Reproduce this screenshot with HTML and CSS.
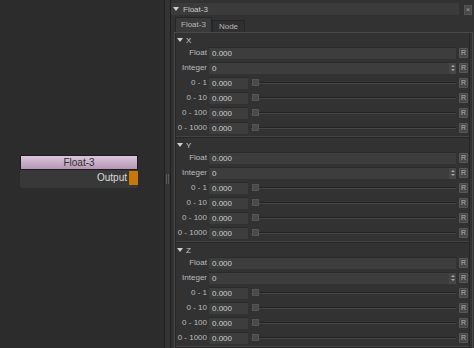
FILE: index.html
```html
<!DOCTYPE html>
<html>
<head>
<meta charset="utf-8">
<link rel="stylesheet" href="styles.css">
</head>
<body>
<div class="app">
  <div class="canvas">
    <div class="node">
      <div class="node-title">Float-3</div>
      <div class="node-body"><span class="plug-label">Output</span><span class="port"></span></div>
    </div>
  </div>
  <div class="splitter"><span class="grip"></span></div>
  <div class="panel">
    <div class="panel-head">
      <div class="name-bar"><span class="tri"></span><span class="name">Float-3</span></div>
      <span class="close">×</span>
    </div>
    <div class="tabs"><span class="tab active">Float-3</span><span class="tab">Node</span></div>
    <div class="pane">
      <section class="group">
        <div class="group-head"><span class="tri"></span><span class="group-name">X</span></div>
        <div class="row"><span class="lbl">Float</span><div class="ctl"><div class="field">0.000</div></div><span class="reset">R</span></div>
        <div class="row"><span class="lbl">Integer</span><div class="ctl"><div class="field">0<span class="spin"><i class="up"></i><i class="down"></i></span></div></div><span class="reset">R</span></div>
        <div class="row"><span class="lbl">0 - 1</span><div class="ctl"><div class="field short">0.000</div><div class="slider"><span class="handle"></span></div></div><span class="reset">R</span></div>
        <div class="row"><span class="lbl">0 - 10</span><div class="ctl"><div class="field short">0.000</div><div class="slider"><span class="handle"></span></div></div><span class="reset">R</span></div>
        <div class="row"><span class="lbl">0 - 100</span><div class="ctl"><div class="field short">0.000</div><div class="slider"><span class="handle"></span></div></div><span class="reset">R</span></div>
        <div class="row"><span class="lbl">0 - 1000</span><div class="ctl"><div class="field short">0.000</div><div class="slider"><span class="handle"></span></div></div><span class="reset">R</span></div>
      </section>
      <section class="group">
        <div class="group-head"><span class="tri"></span><span class="group-name">Y</span></div>
        <div class="row"><span class="lbl">Float</span><div class="ctl"><div class="field">0.000</div></div><span class="reset">R</span></div>
        <div class="row"><span class="lbl">Integer</span><div class="ctl"><div class="field">0<span class="spin"><i class="up"></i><i class="down"></i></span></div></div><span class="reset">R</span></div>
        <div class="row"><span class="lbl">0 - 1</span><div class="ctl"><div class="field short">0.000</div><div class="slider"><span class="handle"></span></div></div><span class="reset">R</span></div>
        <div class="row"><span class="lbl">0 - 10</span><div class="ctl"><div class="field short">0.000</div><div class="slider"><span class="handle"></span></div></div><span class="reset">R</span></div>
        <div class="row"><span class="lbl">0 - 100</span><div class="ctl"><div class="field short">0.000</div><div class="slider"><span class="handle"></span></div></div><span class="reset">R</span></div>
        <div class="row"><span class="lbl">0 - 1000</span><div class="ctl"><div class="field short">0.000</div><div class="slider"><span class="handle"></span></div></div><span class="reset">R</span></div>
      </section>
      <section class="group">
        <div class="group-head"><span class="tri"></span><span class="group-name">Z</span></div>
        <div class="row"><span class="lbl">Float</span><div class="ctl"><div class="field">0.000</div></div><span class="reset">R</span></div>
        <div class="row"><span class="lbl">Integer</span><div class="ctl"><div class="field">0<span class="spin"><i class="up"></i><i class="down"></i></span></div></div><span class="reset">R</span></div>
        <div class="row"><span class="lbl">0 - 1</span><div class="ctl"><div class="field short">0.000</div><div class="slider"><span class="handle"></span></div></div><span class="reset">R</span></div>
        <div class="row"><span class="lbl">0 - 10</span><div class="ctl"><div class="field short">0.000</div><div class="slider"><span class="handle"></span></div></div><span class="reset">R</span></div>
        <div class="row"><span class="lbl">0 - 100</span><div class="ctl"><div class="field short">0.000</div><div class="slider"><span class="handle"></span></div></div><span class="reset">R</span></div>
        <div class="row"><span class="lbl">0 - 1000</span><div class="ctl"><div class="field short">0.000</div><div class="slider"><span class="handle"></span></div></div><span class="reset">R</span></div>
      </section>
    </div>
  </div>
</div>
</body>
</html>
```

FILE: styles.css
```css
* { box-sizing: border-box; }
html, body {
  margin: 0;
  padding: 0;
  width: 474px;
  height: 348px;
  overflow: hidden;
  background: #2b2b2b;
  font-family: "Liberation Sans", Arial, sans-serif;
  font-size: 8px;
  color: #bdbdbd;
}
.app {
  display: flex;
  width: 474px;
  height: 348px;
}
.canvas {
  position: relative;
  width: 165px;
  flex: none;
  background: #2c2c2c;
  border-right: 1px solid #1f1f1f;
}
.node {
  position: absolute;
  left: 20px;
  top: 155px;
  width: 118px;
}
.node-title {
  height: 15px;
  border: 1px solid #1c1c1c;
  background: linear-gradient(#dcc6dc, #b596b5);
  color: #2e2e2e;
  font-size: 10px;
  line-height: 13px;
  text-align: center;
}
.node-body {
  height: 18px;
  display: flex;
  align-items: flex-start;
  justify-content: flex-end;
  background: #383838;
  border-radius: 0 0 3px 3px;
  padding-top: 1px;
}
.plug-label {
  font-size: 10px;
  color: #dcdcdc;
  line-height: 14px;
  margin-right: 2px;
}
.port {
  width: 9px;
  height: 14px;
  background: #c8780a;
}
.splitter {
  width: 6px;
  flex: none;
  background: #343434;
  border-right: 1px solid #1f1f1f;
  display: flex;
  align-items: center;
  justify-content: center;
}
.grip {
  width: 3px;
  height: 10px;
  border-left: 1px solid #5a5a5a;
  border-right: 1px solid #5a5a5a;
  margin-top: 10px;
}
.panel {
  flex: 1;
  background: #323232;
  display: flex;
  flex-direction: column;
}
.panel-head {
  height: 16px;
  display: flex;
  align-items: flex-start;
  padding-top: 3px;
}
.name-bar {
  width: 288px;
  height: 12px;
  background: #3b3b3b;
  display: flex;
  align-items: center;
  padding-left: 2px;
}
.tri {
  width: 0;
  height: 0;
  border-left: 3px solid transparent;
  border-right: 3px solid transparent;
  border-top: 4px solid #d0d0d0;
  flex: none;
}
.name {
  margin-left: 4px;
  color: #cacaca;
}
.close {
  width: 8px;
  height: 10px;
  margin-top: 2px;
  margin-left: 5px;
  background: #484848;
  border: 1px solid #555;
  color: #aaa;
  font-size: 7px;
  line-height: 8px;
  text-align: center;
}
.tabs {
  height: 16px;
  display: flex;
  align-items: flex-end;
  padding-left: 4px;
}
.tab {
  height: 12px;
  padding: 0 6px;
  border: 1px solid #262626;
  border-bottom: none;
  background: #303030;
  line-height: 11px;
  color: #b8b8b8;
  white-space: nowrap;
}
.tab.active {
  height: 15px;
  background: #3a3a3a;
  line-height: 14px;
  padding: 0 5px;
}
.pane {
  flex: 1;
  margin: 0 1px 0 3px;
  border: 1px solid #484848;
  border-bottom: none;
  padding-right: 2px;
}
.group {
  border-left: 1px solid #262626;
  border-right: 1px solid #262626;
  border-bottom: 1px solid #262626;
  padding-bottom: 2px;
  box-shadow: inset 0 -1px 0 #444;
}
.group-head {
  height: 12px;
  display: flex;
  align-items: center;
  padding-left: 1px;
  padding-top: 2px;
}
.group-name {
  margin-left: 3px;
  color: #cacaca;
}
.row {
  height: 15px;
  display: flex;
  align-items: center;
  padding-right: 1px;
}
.lbl {
  width: 31px;
  flex: none;
  text-align: right;
  white-space: nowrap;
  margin-right: 2px;
}
.ctl {
  flex: 1;
  display: flex;
  align-items: center;
  height: 12px;
}
.field {
  flex: 1;
  height: 12px;
  background: #3d3d3d;
  border-top: 1px solid #2a2a2a;
  line-height: 11px;
  padding-left: 3px;
  color: #cfcfcf;
  position: relative;
  white-space: nowrap;
}
.field.short {
  flex: none;
  width: 39px;
}
.spin {
  position: absolute;
  right: 0;
  top: 0;
  width: 7px;
  height: 11px;
  background: #464646;
  display: flex;
  flex-direction: column;
  align-items: center;
  justify-content: center;
  gap: 2px;
}
.spin i {
  width: 0;
  height: 0;
  border-left: 2px solid transparent;
  border-right: 2px solid transparent;
}
.spin .up { border-bottom: 2px solid #aaa; }
.spin .down { border-top: 2px solid #aaa; }
.slider {
  flex: 1;
  height: 12px;
  margin-left: 3px;
  display: flex;
  align-items: center;
  background: linear-gradient(#323232 5px, #222 5px, #222 6px, #464646 6px, #464646 7px, #323232 7px);
}
.handle {
  width: 7px;
  height: 7px;
  margin-left: 1px;
  background: #4a4a4a;
  border: 1px solid #555;
}
.reset {
  width: 9px;
  height: 10px;
  flex: none;
  margin-left: 3px;
  background: #484848;
  border: 1px solid #575757;
  border-radius: 1px;
  color: #b4b4b4;
  font-size: 7px;
  line-height: 8px;
  text-align: center;
}
```
